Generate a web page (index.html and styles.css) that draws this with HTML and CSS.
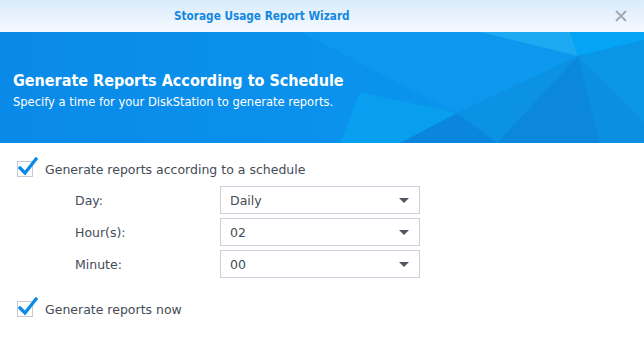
FILE: index.html
```html
<!DOCTYPE html>
<html>
<head>
<meta charset="utf-8">
<link rel="stylesheet" href="styles.css">
</head>
<body>
<div class="window">
  <div class="titlebar">
    <div class="title">Storage Usage Report Wizard</div>
    <svg class="close" width="12" height="12" viewBox="0 0 12 12"><path d="M1 1 L11 11 M11 1 L1 11" stroke="#a1a8af" stroke-width="1.8"/></svg>
  </div>
  <div class="banner">
    <svg class="facets" width="644" height="111" viewBox="0 0 644 111" preserveAspectRatio="none">
      <defs>
        <linearGradient id="base" x1="0" y1="0" x2="1" y2="0">
          <stop offset="0" stop-color="#0a8ae8"/>
          <stop offset="0.6" stop-color="#0a93ee"/>
          <stop offset="1" stop-color="#0897e8"/>
        </linearGradient>
      </defs>
      <rect width="644" height="111" fill="url(#base)"/>
      <polygon points="300,0 480,0 578,24 457,81" fill="#0c98ef"/>
      <polygon points="480,0 570,0 578,24" fill="#1cabf2"/>
      <polygon points="570,0 644,0 644,8 578,24" fill="#05a4f4"/>
      <polygon points="360,60 457,81 578,24 400,111 340,111" fill="#08a6f0" opacity="0.6"/>
      <polygon points="457,81 578,24 497,111" fill="#0b92e4"/>
      <polygon points="400,111 457,81 497,111" fill="#0a86de"/>
      <polygon points="578,24 600,111 497,111" fill="#0b88dc"/>
      <polygon points="578,24 644,8 644,90" fill="#0a96e6"/>
      <polygon points="578,24 644,90 644,111 600,111" fill="#0a8fe2"/>
    </svg>
    <div class="banner-text">
      <div class="heading">Generate Reports According to Schedule</div>
      <div class="sub">Specify a time for your DiskStation to generate reports.</div>
    </div>
  </div>
  <div class="content">
    <label class="check-row">
      <span class="checkbox"><svg width="22" height="20" viewBox="0 0 22 20"><path d="M3 11 L8 16 L19 2" fill="none" stroke="#0a8ae6" stroke-width="3.2" stroke-linecap="square"/></svg></span>
      <span>Generate reports according to a schedule</span>
    </label>
    <div class="fields">
      <div class="field">
        <span class="label">Day:</span>
        <div class="select"><span>Daily</span><span class="arrow"></span></div>
      </div>
      <div class="field">
        <span class="label">Hour(s):</span>
        <div class="select"><span>02</span><span class="arrow"></span></div>
      </div>
      <div class="field">
        <span class="label">Minute:</span>
        <div class="select"><span>00</span><span class="arrow"></span></div>
      </div>
    </div>
    <label class="check-row now">
      <span class="checkbox"><svg width="22" height="20" viewBox="0 0 22 20"><path d="M3 11 L8 16 L19 2" fill="none" stroke="#0a8ae6" stroke-width="3.2" stroke-linecap="square"/></svg></span>
      <span>Generate reports now</span>
    </label>
  </div>
</div>
</body>
</html>
```
FILE: styles.css
```css
html, body {
  margin: 0;
  padding: 0;
  background: #ffffff;
}
.window {
  width: 644px;
  height: 343px;
  font-family: "DejaVu Sans", Verdana, sans-serif;
  color: #434c56;
  overflow: hidden;
}
.titlebar {
  height: 32px;
  display: flex;
  align-items: center;
  background: linear-gradient(#d9ebfb, #f6faff);
  position: relative;
}
.title {
  margin-left: 174px;
  font-family: "DejaVu Sans Condensed", "DejaVu Sans", sans-serif;
  font-stretch: condensed;
  font-size: 11.7px;
  font-weight: bold;
  color: #1387e0;
}
.close {
  position: absolute;
  right: 17px;
  top: 10px;
}
.banner {
  height: 111px;
  position: relative;
  overflow: hidden;
}
.facets {
  position: absolute;
  left: 0;
  top: 0;
}
.banner-text {
  position: relative;
  padding: 38px 0 0 13px;
  color: #ffffff;
  font-family: "DejaVu Sans Condensed", "DejaVu Sans", sans-serif;
  font-stretch: condensed;
}
.heading {
  font-size: 16px;
  font-weight: bold;
  line-height: 22px;
}
.sub {
  font-size: 12.8px;
  line-height: 20px;
}
.content {
  display: flex;
  flex-direction: column;
  font-size: 12.5px;
}
.check-row {
  display: flex;
  align-items: center;
  margin: 18px 0 0 17px;
  height: 16px;
}
.checkbox {
  width: 16px;
  height: 16px;
  border: 1px solid #c3cbd5;
  box-sizing: border-box;
  margin-right: 12px;
  position: relative;
}
.checkbox svg {
  position: absolute;
  left: -1px;
  top: -5px;
}
.fields {
  display: flex;
  flex-direction: column;
  gap: 4px;
  margin: 9px 0 0 75px;
}
.field {
  display: flex;
  align-items: center;
  height: 28px;
}
.label {
  width: 145px;
}
.select {
  width: 200px;
  height: 28px;
  box-sizing: border-box;
  border: 1px solid #c9d2dd;
  display: flex;
  align-items: center;
  justify-content: space-between;
  padding: 0 10px 0 9px;
}
.arrow {
  width: 0;
  height: 0;
  border-left: 5px solid transparent;
  border-right: 5px solid transparent;
  border-top: 5px solid #505963;
}
.check-row.now {
  margin-top: 23px;
}
```
